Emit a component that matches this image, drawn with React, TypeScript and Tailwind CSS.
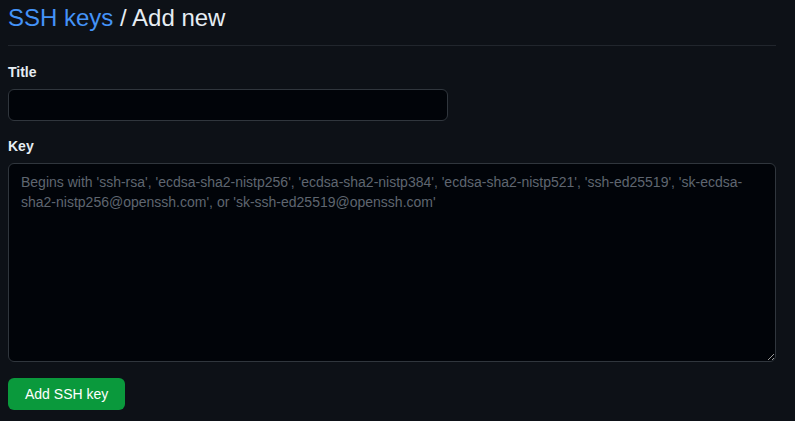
import React, { useState } from 'react';

const placeholderText =
  "Begins with 'ssh-rsa', 'ecdsa-sha2-nistp256', 'ecdsa-sha2-nistp384', 'ecdsa-sha2-nistp521', 'ssh-ed25519', 'sk-ecdsa-sha2-nistp256@openssh.com', or 'sk-ssh-ed25519@openssh.com'";

export default function App() {
  const [title, setTitle] = useState("");
  const [key, setKey] = useState("");

  return (
    <div className="min-h-[421px] bg-[#0d1117] text-[#e6edf3] font-['Liberation_Sans',Arial,sans-serif]">
      <div className="w-[768px] ml-[8px]">
        {/* Page heading */}
        <div className="border-b border-[#21262d] pb-[9px]">
          <h2 className="text-[24px] leading-[36px] font-normal">
            <a href="#" className="text-[#4493f8]">SSH keys</a>
            <span className="text-[#e6edf3]"> / Add new</span>
          </h2>
        </div>

        <form className="pt-[16px]" onSubmit={(e) => e.preventDefault()}>
          <div>
            <label htmlFor="title" className="block text-[14px] leading-[21px] font-bold mb-[6px]">
              Title
            </label>
            <input
              id="title"
              value={title}
              onChange={(e) => setTitle(e.target.value)}
              className="block w-[440px] h-[32px] rounded-[6px] border border-[#30363d] bg-[#010409] px-[12px] text-[14px] outline-none"
            />
          </div>

          <div className="mt-[15px]">
            <label htmlFor="key" className="block text-[14px] leading-[21px] font-bold mb-[6px]">
              Key
            </label>
            <textarea
              id="key"
              value={key}
              onChange={(e) => setKey(e.target.value)}
              placeholder={placeholderText}
              className="block w-full h-[199px] rounded-[6px] border border-[#30363d] bg-[#010409] px-[12px] pt-[8px] text-[14px] leading-[20px] text-[#e6edf3] placeholder:text-[#5f6670] outline-none"
            />
          </div>

          <button
            type="submit"
            className="mt-[16px] h-[32px] px-[17px] rounded-[6px] bg-[#0a993c] text-white text-[14px] leading-[20px] font-medium"
          >
            Add SSH key
          </button>
        </form>
      </div>
    </div>
  );
}
